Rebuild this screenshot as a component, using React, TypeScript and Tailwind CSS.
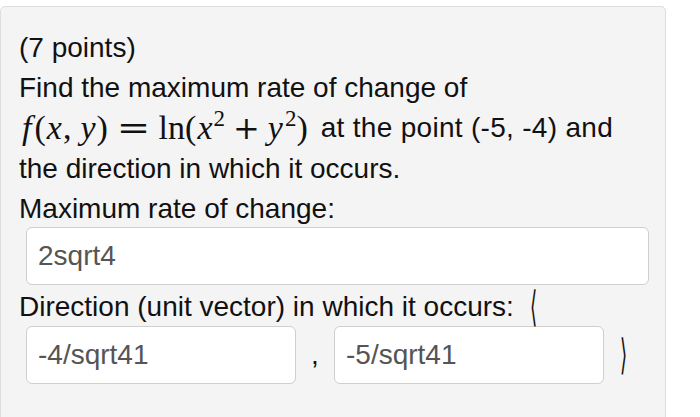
export default function App() {
  const sans = { fontFamily: '"Liberation Sans", Arial, sans-serif' };
  const input =
    "h-[58px] bg-white border border-[#cfcfcf] rounded-[6px] px-[11px] flex items-center text-[#555]";
  const bracket =
    "inline-block font-['DejaVu_Sans',sans-serif] font-extralight text-[26px] leading-none scale-y-[1.6] scale-x-[0.7]";
  return (
    <div className="w-[700px] h-[417px] bg-white overflow-hidden" style={sans}>
      <div className="mt-[6px] w-[666px] h-[420px] bg-[#f4f4f4] border border-[#dedede] rounded-[5px] pl-[18px] pr-[16px] pt-[21px] text-[#111] text-[28px] leading-[40px]">
        <div>(7 points)</div>
        <div>Find the maximum rate of change of</div>
        <div className="h-[40px] flex items-center whitespace-nowrap">
          <span className="ml-[3px] font-['Liberation_Serif',serif] text-[34px] leading-none">
            <i className="mr-[3px]">f</i>(<i className="mx-[1px]">x</i>,<i className="ml-[9px] mr-[1px]">y</i>)
            <span className="mx-[12px] inline-block font-['DejaVu_Serif',serif] text-[32px] scale-x-[1.25]">=</span>
            ln(<i className="mx-[1px]">x</i>
            <span className="relative -top-[13px] text-[23px] leading-none">2</span>
            <span className="mx-[8px] inline-block font-['DejaVu_Serif',serif] text-[32px]">+</span>
            <i className="mr-[2px]">y</i>
            <span className="relative -top-[13px] text-[23px] leading-none">2</span>)
          </span>
          <span className="ml-[13px] tracking-[0.3px]">at the point (-5, -4) and</span>
        </div>
        <div className="mt-[1px]">the direction in which it occurs.</div>
        <div>Maximum rate of change:</div>
        <div className={`ml-[7px] mt-[-2px] w-[623px] ${input}`}>2sqrt4</div>
        <div className="mt-[2px] h-[40px] flex items-center whitespace-nowrap">
          Direction (unit vector) in which it occurs:
          <span className={`ml-[14px] ${bracket}`}>⟨</span>
        </div>
        <div className="flex items-center mt-[-1px]">
          <div className={`ml-[7px] w-[270px] ${input}`}>-4/sqrt41</div>
          <div className="w-[38px] text-center">,</div>
          <div className={`w-[270px] ${input}`}>-5/sqrt41</div>
          <span className={`ml-[14px] ${bracket}`}>⟩</span>
        </div>
      </div>
    </div>
  );
}
